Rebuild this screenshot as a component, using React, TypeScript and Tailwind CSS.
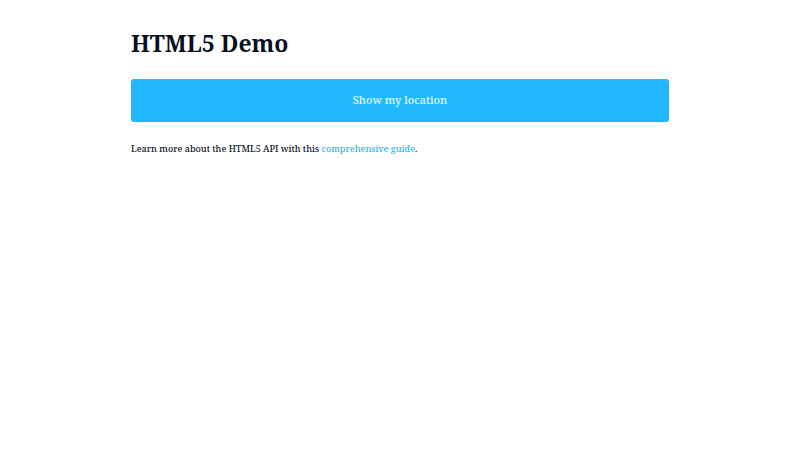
export default function App() {
  return (
    <main className="mx-auto w-full max-w-[562px] px-3 pt-6 font-['Noto_Serif','Liberation_Serif',serif] text-[#080f1e]">
      <h1 className="text-[23px] leading-[38px] font-bold">HTML5 Demo</h1>
      <button type="button" className="mt-[17px] block h-[43px] w-full rounded-[3px] bg-[#22b8ff] text-[11px] font-medium text-[#e6faff]">
        Show my location
      </button>
      <p className="mt-[17px] text-[9px] leading-5 font-medium">
        Learn more about the HTML5 API with this{" "}
        <a href="#guide" className="text-[#30b3e5]">comprehensive guide</a>.
      </p>
    </main>
  );
}
